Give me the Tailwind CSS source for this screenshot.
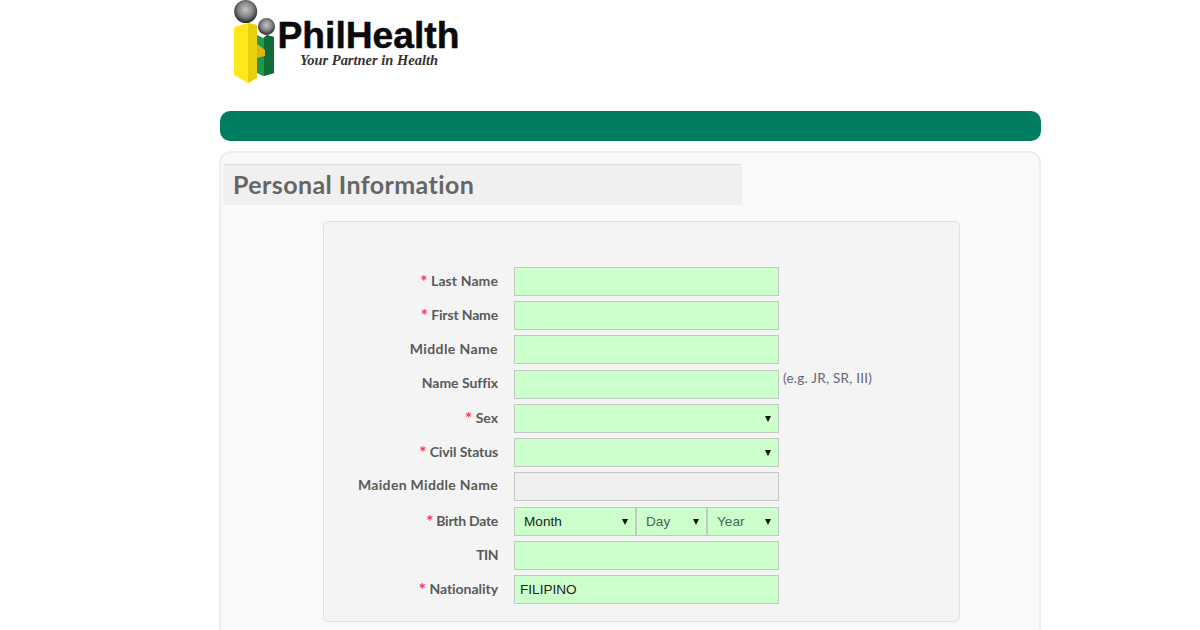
<!DOCTYPE html>
<html>
<head>
<meta charset="utf-8">
<script src="https://cdn.jsdelivr.net/npm/@tailwindcss/browser@4"></script>
</head>
<body class="bg-white h-[630px] overflow-hidden font-['Lato',sans-serif]">
<div class="w-[822px] ml-[219px]">
  <header class="h-[111px]">
    <svg width="250" height="90" viewBox="219 0 250 90" class="block" role="img">
      <defs>
        <radialGradient id="ball" cx="50%" cy="42%" r="58%">
          <stop offset="0" stop-color="#c4c4c4"/><stop offset=".55" stop-color="#858585"/><stop offset="1" stop-color="#222222"/>
        </radialGradient>
      </defs>
      <circle cx="245.700" cy="11.500" r="11.500" fill="url(#ball)"/>
      <circle cx="266.500" cy="26.500" r="8.500" fill="url(#ball)"/>
      <path d="M257 35l6 3 4-3 7 2v36l-11 3-6-3z" fill="#1f9a48"/>
      <path d="M264 38l3-3 7 2v36l-10 3z" fill="#0f6e38"/>
      <path d="M234 27l14-4 9 2v53l-9 5-14-8z" fill="#ffe81a"/>
      <path d="M248 23l9 2v53l-9 5z" fill="#e9cf0e"/>
      <path d="M257 44l8 6v6l-8 2z" fill="#d9b80e"/>
      <text x="277.500" y="48" font-family="Liberation Sans" font-weight="700" font-size="37.500" textLength="182" lengthAdjust="spacingAndGlyphs" fill="#0a0a0a" stroke="#0a0a0a" stroke-width=".5">PhilHealth</text>
      <text x="300" y="65" font-family="Liberation Serif" font-style="italic" font-weight="700" font-size="14" textLength="138" lengthAdjust="spacingAndGlyphs" fill="#333">Your Partner in Health</text>
    </svg>
  </header>
  <div class="ml-px h-[30px] w-[821px] rounded-[10px] bg-[#007c60]"></div>
  <main class="mt-[10px] h-[500px] rounded-t-[12px] border-2 border-[#eeeeee] bg-[#f9f9f9] pt-[11px] pl-[2px]">
    <h1 class="h-[41px] w-[519px] border-t border-[#dddddd] bg-[#f0f0f0] pl-[10px] text-[25px] leading-[39px] font-bold tracking-[0.42px] text-[#666666]">Personal Information</h1>
    <section class="mt-[16px] ml-[100px] w-[637px] h-[401px] rounded-[5px] border border-[#e0e0e0] bg-[#f4f4f4] pt-[45px]">
      <div class="flex flex-col text-[14px] font-bold text-[#5a5a5a]">
        <div class="flex h-[34.22px] items-start"><label class="w-[174px] text-right leading-[28px] tracking-[0.1px]"><span class="text-[17px] leading-none align-[-2px] text-[#ff3355]">*</span> Last Name</label><input class="ml-[16px] h-[29px] w-[265px] border border-[#c4c8c4] bg-[#ccffcc]"></div>
        <div class="flex h-[34.22px] items-start"><label class="w-[174px] text-right leading-[28px] tracking-[-0.15px]"><span class="text-[17px] leading-none align-[-2px] text-[#ff3355]">*</span> First Name</label><input class="ml-[16px] h-[29px] w-[265px] border border-[#c4c8c4] bg-[#ccffcc]"></div>
        <div class="flex h-[34.22px] items-start"><label class="w-[174px] text-right leading-[28px] tracking-[0.4px]">Middle Name</label><input class="ml-[16px] h-[29px] w-[265px] border border-[#c4c8c4] bg-[#ccffcc]"></div>
        <div class="flex h-[34.22px] items-start"><label class="w-[174px] text-right leading-[26px] tracking-[-0.04px]">Name Suffix</label><input class="ml-[16px] h-[29px] w-[265px] border border-[#c4c8c4] bg-[#ccffcc]"><span class="ml-[4px] text-[13.5px] leading-[17px] tracking-[0.25px] font-normal text-[#666677]">(e.g. JR, SR, III)</span></div>
        <div class="flex h-[34.22px] items-start"><label class="w-[174px] text-right leading-[28px]"><span class="text-[17px] leading-none align-[-2px] text-[#ff3355]">*</span> Sex</label>
          <div class="relative ml-[16px] h-[29px] w-[265px]"><select class="h-full w-full appearance-none border border-[#c4c8c4] bg-[#ccffcc]"><option></option></select><svg class="absolute right-[8px] top-[12px]" width="6" height="6" viewBox="0 0 6 6"><path d="M0 0h6L3 6z" fill="#111"/></svg></div></div>
        <div class="flex h-[34.22px] items-start"><label class="w-[174px] text-right leading-[28px] tracking-[-0.1px]"><span class="text-[17px] leading-none align-[-2px] text-[#ff3355]">*</span> Civil Status</label>
          <div class="relative ml-[16px] h-[29px] w-[265px]"><select class="h-full w-full appearance-none border border-[#c4c8c4] bg-[#ccffcc]"><option></option></select><svg class="absolute right-[8px] top-[12px]" width="6" height="6" viewBox="0 0 6 6"><path d="M0 0h6L3 6z" fill="#111"/></svg></div></div>
        <div class="flex h-[34.22px] items-start"><label class="w-[174px] text-right leading-[26px] tracking-[0.32px]">Maiden Middle Name</label><input disabled class="ml-[16px] h-[29px] w-[265px] border border-[#c4c8c4] bg-[#f0f0f0]"></div>
        <div class="flex h-[34.22px] items-start"><label class="w-[174px] text-right leading-[28px] tracking-[-0.28px]"><span class="text-[17px] leading-none align-[-2px] text-[#ff3355]">*</span> Birth Date</label>
          <div class="ml-[16px] flex h-[29px] w-[265px] font-['Liberation_Sans',sans-serif] text-[13.6px] font-normal tracking-normal">
            <div class="relative w-[122px]"><select class="h-full w-full appearance-none border border-[#c4c8c4] bg-[#ccffcc] pt-[2px] pl-[9px] text-[#222222]"><option>Month</option></select><svg class="absolute right-[8px] top-[12px]" width="6" height="6" viewBox="0 0 6 6"><path d="M0 0h6L3 6z" fill="#111"/></svg></div>
            <div class="relative w-[71px]"><select class="h-full w-full appearance-none border border-[#c4c8c4] bg-[#ccffcc] pt-[2px] pl-[9px] text-[#446655]"><option>Day</option></select><svg class="absolute right-[8px] top-[12px]" width="6" height="6" viewBox="0 0 6 6"><path d="M0 0h6L3 6z" fill="#111"/></svg></div>
            <div class="relative w-[72px]"><select class="h-full w-full appearance-none border border-[#c4c8c4] bg-[#ccffcc] pt-[2px] pl-[9px] text-[#446655]"><option>Year</option></select><svg class="absolute right-[8px] top-[12px]" width="6" height="6" viewBox="0 0 6 6"><path d="M0 0h6L3 6z" fill="#111"/></svg></div>
          </div></div>
        <div class="flex h-[34.22px] items-start"><label class="w-[174px] text-right leading-[27px] tracking-[-0.5px]">TIN</label><input class="ml-[16px] h-[29px] w-[265px] border border-[#c4c8c4] bg-[#ccffcc]"></div>
        <div class="flex h-[34.22px] items-start"><label class="w-[174px] text-right leading-[28px] tracking-[-0.04px]"><span class="text-[17px] leading-none align-[-2px] text-[#ff3355]">*</span> Nationality</label><input value="FILIPINO" class="ml-[16px] h-[29px] w-[265px] border border-[#c4c8c4] bg-[#ccffcc] pl-[5px] font-['Liberation_Sans',sans-serif] text-[13.6px] font-normal tracking-normal text-[#222222]"></div>
      </div>
    </section>
  </main>
</div>
</body>
</html>
